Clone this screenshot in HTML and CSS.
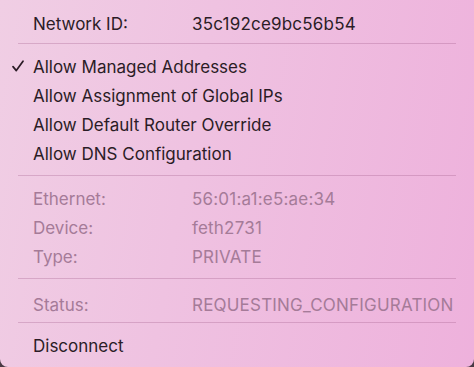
FILE: index.html
```html
<!DOCTYPE html>
<html>
  <head>
    <title>Network Menu</title>
    <link rel="stylesheet" href="styles.css">
  </head>
  <body>
    <div class="menu">
      <div class="section first">
        <div class="row"><span class="label">Network ID:</span><span class="value">35c192ce9bc56b54</span></div>
      </div>
      <div class="sep"></div>

      <div class="section">
        <div class="row">
          <svg class="check" width="12" height="12" viewBox="0 0 12 12">
            <path d="M1 6.6 L4.3 10.6 L11 1.2" fill="none" stroke="#2b1c26" stroke-width="1.7" stroke-linecap="round" stroke-linejoin="round"/>
          </svg>
          <span class="label">Allow Managed Addresses</span>
        </div>
        <div class="row"><span class="label">Allow Assignment of Global IPs</span></div>
        <div class="row"><span class="label">Allow Default Router Override</span></div>
        <div class="row"><span class="label">Allow DNS Configuration</span></div>
      </div>
      <div class="sep"></div>

      <div class="section info">
        <div class="row dim"><span class="label">Ethernet:</span><span class="value">56:01:a1:e5:ae:34</span></div>
        <div class="row dim"><span class="label">Device:</span><span class="value">feth2731</span></div>
        <div class="row dim"><span class="label">Type:</span><span class="value">PRIVATE</span></div>
      </div>
      <div class="sep"></div>

      <div class="section status">
        <div class="row dim"><span class="label">Status:</span><span class="value">REQUESTING_CONFIGURATION</span></div>
      </div>
      <div class="sep"></div>

      <div class="section">
        <div class="row"><span class="label">Disconnect</span></div>
      </div>
    </div>
  </body>
</html>
```

FILE: styles.css
```css
html, body {
  margin: 0;
  padding: 0;
  background: #4a3a45;
}

.menu {
  width: 474px;
  height: 367px;
  overflow: hidden;
  background: linear-gradient(100deg, #f0cee4 0%, #efc2e1 40%, #eeb1dc 100%);
  border-radius: 0 0 8px 8px;
  font-family: "Inter", "Liberation Sans", sans-serif;
  font-size: 17px;
  color: #2b1c26;
}

.section {
  padding: 7px 0 8px 0;
}

.section.first {
  padding: 8px 0 6px 0;
}

.section.status {
  padding: 10px 0 4px 0;
}

.sep {
  height: 1px;
  margin: 0 18px;
  background: rgba(150, 80, 125, 0.28);
}

.row {
  position: relative;
  display: flex;
  height: 29px;
  line-height: 32px;
  padding-left: 33px;
  white-space: nowrap;
}

.label {
  width: 159px;
  flex-shrink: 0;
}

.value {
  letter-spacing: 0.2px;
}

.check {
  position: absolute;
  left: 12px;
  top: 9px;
}

.dim {
  color: #a57b98;
}
```
